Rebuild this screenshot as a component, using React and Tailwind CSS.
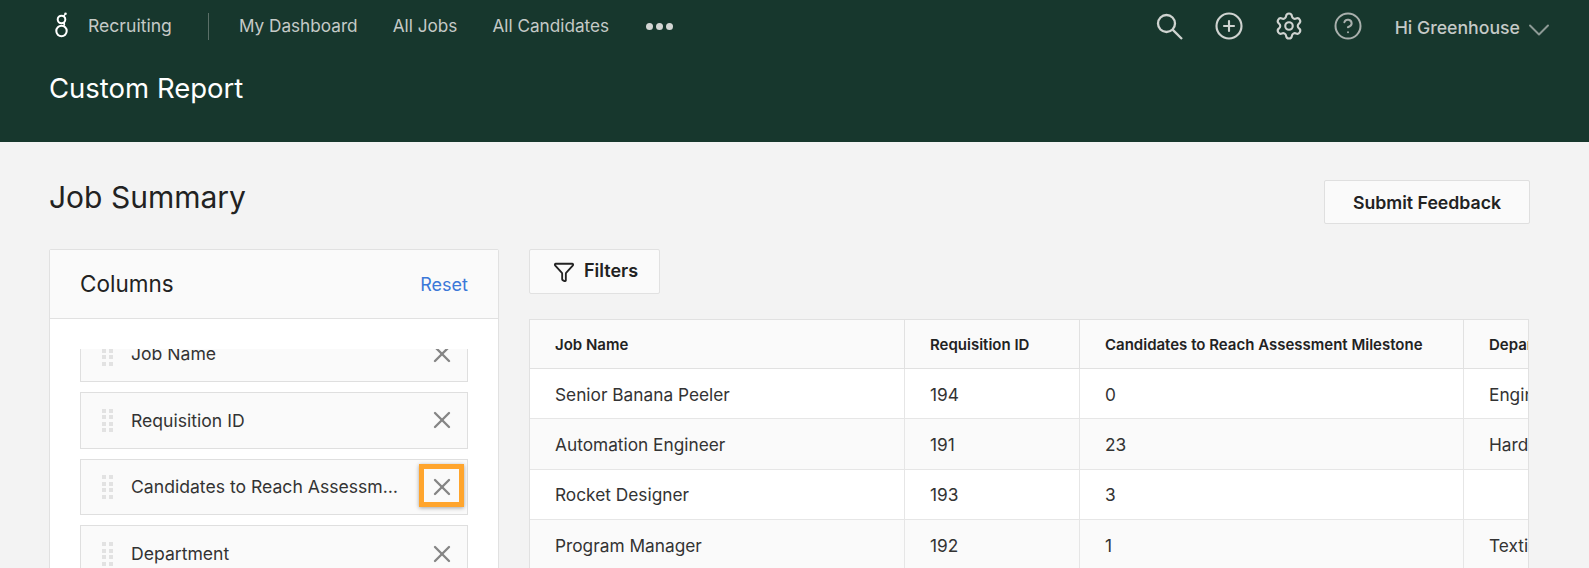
import { CirclePlus, Settings, CircleHelp, ChevronDown, X, Funnel } from 'lucide-react';

const navLinks = [
  { label: 'My Dashboard', className: 'ml-[30px]' },
  { label: 'All Jobs', className: 'ml-[35px]' },
  { label: 'All Candidates', className: 'ml-[35px]' },
];

const columns = [
  { name: 'Job Name', clip: true },
  { name: 'Requisition ID' },
  { name: 'Candidates to Reach Assessment Milestone', highlighted: true },
  { name: 'Department' },
];

const rows = [
  ['Senior Banana Peeler', '194', '0', 'Engineering'],
  ['Automation Engineer', '191', '23', 'Hardware'],
  ['Rocket Designer', '193', '3', ''],
  ['Program Manager', '192', '1', 'Textiles'],
];

function Logo() {
  return (
    <svg width="16" height="27" viewBox="0 0 16 27" fill="none" stroke="white" strokeWidth="2" className="ml-[54px] mt-[-1px]">
      <circle cx="7.5" cy="19" r="5.2" />
      <circle cx="7.5" cy="7.5" r="3.8" />
      <path d="M9.6 4.4 L11 2.4" strokeWidth="1.6" />
      <circle cx="11.5" cy="1.8" r="1.3" fill="white" stroke="none" />
      <path d="M9.5 10.6 C10.5 11.6 10.5 13 9.6 14" strokeWidth="1.6" />
    </svg>
  );
}

function SearchIcon() {
  return (
    <svg width="27" height="27" viewBox="0 0 27 27" fill="none" stroke="#cfd3d0" strokeWidth="2.3">
      <circle cx="10.5" cy="10.5" r="8.5" />
      <path d="M16.6 16.6 L26 26" />
    </svg>
  );
}

function DragHandle() {
  return (
    <div className="grid grid-cols-2 gap-x-[3px] gap-y-[2.5px] w-[11px] shrink-0">
      {[0, 1, 2, 3, 4, 5, 6, 7].map((dot) => (
        <span key={dot} className="w-[4px] h-[4px] bg-[#e2e2e2]" />
      ))}
    </div>
  );
}

function ColumnItem({ name, clip, highlighted }) {
  return (
    <div className={`flex items-center h-[56.67px] pl-[21px] bg-[#fafafa] border border-[#dfdfdf] ${clip ? '-mt-[23.5px]' : ''}`}>
      <DragHandle />
      <span className="ml-[18px] pt-[1px] w-[270px] truncate text-[17.6px] text-[#333]">{name}</span>
      <div className="flex-1 flex justify-end pr-[3px]">
        <div className={`flex items-center justify-center w-[45px] h-[43px] ${highlighted ? '-mt-[4px] pt-[4px] border-[5px] border-[#ffa52d] shadow-[0_1px_4px_rgba(0,0,0,0.35)]' : ''}`}>
          <X size={28} strokeWidth={2} className="shrink-0 text-[#858585]" />
        </div>
      </div>
    </div>
  );
}

function HeaderCell({ children, className = '' }) {
  return (
    <th className={`h-[49px] pl-[25px] pt-[2px] text-left text-[15px] font-semibold text-[#222] whitespace-nowrap overflow-hidden border-r border-b border-[#e1e1e1] ${className}`}>
      {children}
    </th>
  );
}

export default function App() {
  return (
    <div className="h-screen overflow-hidden bg-[#f3f3f3] font-['Inter',sans-serif]">
      <header className="h-[142px] bg-[#17372d]">
        <div className="flex items-center h-[52px]">
          <Logo />
          <span className="ml-[18px] text-[17.6px] text-[#c5cac7]">Recruiting</span>
          <span className="ml-[36px] h-[27px] w-px bg-[#5a6f67]" />
          {navLinks.map((link) => (
            <a key={link.label} className={`${link.className} text-[17.2px] text-[#c5cac7]`}>
              {link.label}
            </a>
          ))}
          <div className="ml-[37px] flex gap-[3px]">
            <span className="w-[7px] h-[7px] rounded-full bg-[#d3d6d4]" />
            <span className="w-[7px] h-[7px] rounded-full bg-[#d3d6d4]" />
            <span className="w-[7px] h-[7px] rounded-full bg-[#d3d6d4]" />
          </div>
          <div className="ml-auto flex items-center pr-[32px]">
            <SearchIcon />
            <CirclePlus size={30} strokeWidth={1.7} className="ml-[31px] text-[#cfd3d0]" />
            <Settings size={30} strokeWidth={1.7} className="ml-[30px] text-[#cfd3d0]" />
            <CircleHelp size={30} strokeWidth={1.6} className="ml-[29px] text-[#a9b0ad]" />
            <span className="ml-[32px] mt-[4px] text-[17.7px] font-medium text-[#c5cac7]">Hi Greenhouse</span>
            <ChevronDown size={36} strokeWidth={1.3} className="ml-[1px] mt-[8px] text-[#8d9a95]" />
          </div>
        </div>
        <h1 className="ml-[49px] mt-[18px] text-[27.5px] leading-[36px] text-white">Custom Report</h1>
      </header>

      <main className="pl-[49px] pr-[60px]">
        <div className="flex items-start justify-between pt-[38px]">
          <h2 className="-mt-[2px] text-[30px] leading-[38px] text-[#222]">Job Summary</h2>
          <button className="w-[206px] h-[44px] pt-[3px] -mr-px bg-[#fafafa] border border-[#dfdfdf] rounded-[2px] text-[17.7px] font-semibold text-[#222]">
            Submit Feedback
          </button>
        </div>

        <div className="flex items-start mt-[25px]">
          <section className="w-[450px] shrink-0 bg-white border border-[#e1e1e1] rounded-[2px]">
            <div className="flex items-center justify-between h-[69px] pl-[30px] pr-[30px] bg-[#fafafa] border-b border-[#e1e1e1]">
              <span className="text-[22.5px] text-[#222]">Columns</span>
              <a className="text-[18px] text-[#3b78d8]">Reset</a>
            </div>
            <div className="mx-[30px] mt-[30px] h-[400px] overflow-hidden">
              <div className="flex flex-col gap-[10px]">
                {columns.map((column) => (
                  <ColumnItem key={column.name} {...column} />
                ))}
              </div>
            </div>
          </section>

          <div className="ml-[30px] flex-1 min-w-0">
            <button className="flex items-center w-[131px] h-[45px] pl-[23px] bg-[#fafafa] border border-[#e1e1e1] rounded-[2px]">
              <Funnel size={22} strokeWidth={2} className="text-[#222]" />
              <span className="ml-[9px] mb-[3px] text-[18px] font-semibold text-[#222]">Filters</span>
            </button>

            <div className="mt-[25px] overflow-hidden border-t border-l border-r border-[#e1e1e1]">
              <table className="table-fixed border-separate border-spacing-0 w-[1200px]">
                <colgroup>
                  <col className="w-[375px]" />
                  <col className="w-[175px]" />
                  <col className="w-[384px]" />
                  <col className="w-[266px]" />
                </colgroup>
                <thead className="bg-[#fafafa]">
                  <tr>
                    <HeaderCell>Job Name</HeaderCell>
                    <HeaderCell>Requisition ID</HeaderCell>
                    <HeaderCell>Candidates to Reach Assessment Milestone</HeaderCell>
                    <HeaderCell>Department</HeaderCell>
                  </tr>
                </thead>
                <tbody>
                  {rows.map((row, index) => (
                    <tr key={row[0]} className={index % 2 === 1 ? 'bg-[#fafafa]' : 'bg-white'}>
                      {row.map((cell, cellIndex) => (
                        <td key={cellIndex} className="h-[50.3px] pl-[25px] pt-[2px] text-[17.3px] text-[#333] whitespace-nowrap border-r border-b border-[#e6e6e6]">
                          {cell}
                        </td>
                      ))}
                    </tr>
                  ))}
                </tbody>
              </table>
            </div>
          </div>
        </div>
      </main>
    </div>
  );
}
